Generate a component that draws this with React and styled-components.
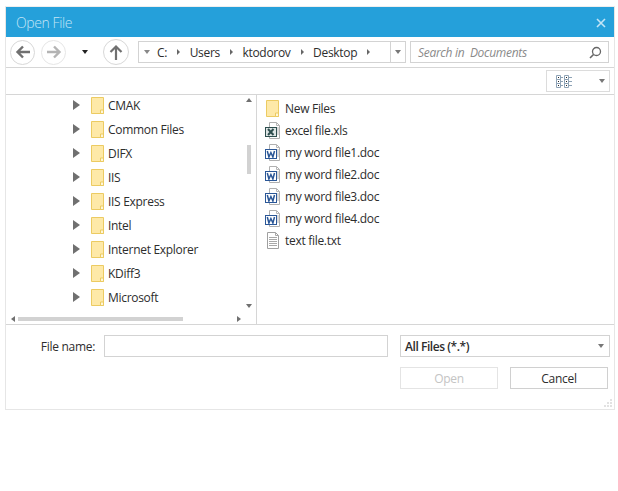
import React from "react";
import styled, { createGlobalStyle } from "styled-components";

const Global = createGlobalStyle`
  html, body { margin: 0; padding: 0; background: #fff; }
  body { font-family: "Open Sans", "Noto Sans", sans-serif; font-size: 12px; letter-spacing: -0.3px; color: #2d2d2d; }
`;

const Page = styled.div`
  width: 618px; height: 491px; padding: 6px 3px 0 5px; box-sizing: border-box; background: #fff;
`;
const Dialog = styled.div`
  width: 610px; height: 404px; box-sizing: border-box; border: 1px solid #e6e6e6; border-top: 1px solid #eee;
  display: flex; flex-direction: column; background: #fff;
`;
const TitleBar = styled.div`
  height: 30px; flex: none; background: #25a0da; display: flex; align-items: center; justify-content: space-between;
  padding: 1px 8px 0 10px; box-sizing: border-box; color: #c4e5f6; font-size: 14px; font-weight: 300; letter-spacing: -0.4px;
`;
const Toolbar = styled.div`
  height: 30px; flex: none; display: flex; align-items: center; padding: 0 5px 0 4px; border-bottom: 1px solid #d6d6d6;
`;
const RoundButton = styled.div`
  width: ${p => p.$size || 25}px; height: ${p => p.$size || 25}px; border: 1px solid ${p => p.$muted ? "#e6e6e6" : "#d8d8d8"}; border-radius: 50%; box-sizing: border-box;
  display: flex; align-items: center; justify-content: center; margin-right: ${p => p.$mr || 0}px; flex: none;
`;
const HistoryCaret = styled.div`
  width: 0; height: 0; border: 3px solid transparent; border-top: 4px solid #222; border-bottom: 0; margin: 0 15px 0 16px; flex: none;
`;
const Crumbs = styled.div`
  margin-left: 9px; width: 268px; height: 22px; box-sizing: border-box; border: 1px solid #d3d3d3; display: flex; align-items: center; flex: none;
`;
const CrumbPath = styled.div`
  flex: 1; display: flex; align-items: center; padding-left: 5px; height: 100%;
`;
const CrumbLabel = styled.span`
  margin-right: 10px; white-space: nowrap;
`;
const SmallDown = styled.span`
  width: 0; height: 0; border: 3px solid transparent; border-top: 4px solid ${p => p.$c || "#777"}; border-bottom: 0; display: block; flex: none; margin-right: ${p => p.$mr || 0}px;
`;
const SmallRight = styled.span`
  width: 0; height: 0; border: 3px solid transparent; border-left: 3px solid #666; border-right: 0; display: block; flex: none; margin-right: 9.5px;
`;
const CrumbDrop = styled.div`
  width: 15px; height: 100%; border-left: 1px solid #d3d3d3; display: flex; align-items: center; justify-content: center; box-sizing: border-box;
`;
const Search = styled.div`
  margin-left: 4px; flex: 1; height: 22px; box-sizing: border-box; border: 1px solid #d3d3d3; display: flex; align-items: center; justify-content: space-between;
  padding: 0 6px 0 7px; color: #8a8a8a; font-style: italic; white-space: pre;
`;
const ViewBar = styled(Toolbar)`
  height: 26px; justify-content: flex-end; padding-right: 4px;
`;
const ViewPicker = styled.div`
  width: 64px; height: 22px; box-sizing: border-box; border: 1px solid #dcdcdc; display: flex; align-items: center; justify-content: space-between; padding: 0 4px 0 9px;
`;
const Panes = styled.div`
  height: 229px; flex: none; display: flex; border-bottom: 1px solid #d6d6d6;
`;
const TreePane = styled.div`
  width: 251px; box-sizing: border-box; flex: none; border-right: 1px solid #d6d6d6; display: flex; flex-direction: column; overflow: hidden;
`;
const TreeBody = styled.div`
  height: 218px; flex: none; display: flex; overflow: hidden;
`;
const TreeList = styled.div`
  flex: 1; padding-left: 67px; margin-top: -2px;
`;
const TreeRow = styled.div`
  height: 24px; display: flex; align-items: center; white-space: nowrap;
`;
const Expander = styled.span`
  width: 0; height: 0; border: 5px solid transparent; border-left: 7px solid #707070; border-right: 0; margin-right: 11px; flex: none; display: block;
`;
const RowLabel = styled.span`
  margin-left: ${p => p.$ml}px; white-space: nowrap;
`;
const VScroll = styled.div`
  width: 14px; flex: none; display: flex; flex-direction: column; align-items: center; padding: 3px 0 0;
`;
const VThumb = styled.div`
  width: 4px; height: 29px; background: #d2d2d2; margin-top: 43px;
`;
const ArrowUp = styled.span`
  width: 0; height: 0; border: 3px solid transparent; border-bottom: 4px solid #707070; border-top: 0; display: block;
`;
const ArrowDown = styled.span`
  width: 0; height: 0; border: 3px solid transparent; border-top: 4px solid #707070; border-bottom: 0; display: block; margin-bottom: 5px; margin-top: auto;
`;
const HScroll = styled.div`
  height: 11px; flex: none; display: flex; align-items: center; padding: 0 15px 0 5px;
`;
const HThumb = styled.div`
  width: 165px; height: 4px; background: #d2d2d2; margin-left: 3px;
`;
const ArrowLeft = styled.span`
  width: 0; height: 0; border: 3px solid transparent; border-right: 4px solid #707070; border-left: 0; display: block;
`;
const ArrowRight = styled.span`
  width: 0; height: 0; border: 3px solid transparent; border-left: 4px solid #707070; border-right: 0; display: block; margin-left: auto;
`;
const FileList = styled.div`
  flex: 1; padding: 2px 0 0 8px;
`;
const FileRow = styled.div`
  height: 22px; display: flex; align-items: center;
`;
const FolderSlot = styled.span`
  display: flex; padding-left: 1px;
`;
const Footer = styled.div`
  flex: 1; display: flex; flex-direction: column; padding: 10px 4px 0 0; position: relative;
`;
const NameRow = styled.div`
  display: flex; align-items: center; height: 22px;
`;
const NameLabel = styled.span`
  width: 89px; text-align: right; flex: none;
`;
const NameInput = styled.div`
  width: 284px; height: 22px; box-sizing: border-box; border: 1px solid #d3d3d3; margin-left: 9px; flex: none;
`;
const TypeSelect = styled.div`
  margin-left: 12px; flex: 1; height: 22px; box-sizing: border-box; border: 1px solid #d3d3d3; display: flex; align-items: center; justify-content: space-between;
  padding: 0 5px 0 4px; font-weight: 600; letter-spacing: -0.45px;
`;
const Actions = styled.div`
  display: flex; justify-content: flex-end; gap: 12px; margin-top: 10px; padding-right: 2px;
`;
const ActionButton = styled.div`
  width: 98px; height: 22px; box-sizing: border-box; border: 1px solid ${p => p.$disabled ? "#e4e4e4" : "#d0d0d0"}; display: flex; align-items: center; justify-content: center;
  color: ${p => p.$disabled ? "#c4c4c4" : "#2d2d2d"};
`;
const Grip = styled.svg`
  position: absolute; right: 2px; bottom: 2px;
`;

const Folder = () => (
  <svg width="13" height="17" viewBox="0 0 13 17">
    <path d="M.5.5h12v16H.5z" fill="#fee9a8" stroke="#eccb62" />
    <path d="M9.5 13v3.5h3V13z" fill="#fff6d8" stroke="#eccb62" />
  </svg>
);
const PageShape = ({ children }) => (
  <svg width="16" height="17" viewBox="0 0 16 17">
    <path d="M4.5.5h7l3 3v13h-10z" fill="#fff" stroke="#b0b0b0" />
    <path d="M11.5.5v3h3M12 6h2M12 8h2M12 10h2M12 12h2" fill="none" stroke="#b8b8b8" />
    {children}
  </svg>
);
const WordIcon = () => (
  <PageShape>
    <rect x=".5" y="5.5" width="11" height="9" fill="#fff" stroke="#2b5797" />
    <path d="M2.3 7l1.6 6 2-4.5 2 4.5 1.6-6" fill="none" stroke="#2b5797" strokeWidth="1.5" />
  </PageShape>
);
const ExcelIcon = () => (
  <PageShape>
    <rect x=".5" y="5.5" width="11" height="9" fill="#dfe6e6" stroke="#2f4f4f" />
    <path d="M3 7l5.5 6M8.5 7L3 13" fill="none" stroke="#2f4f4f" strokeWidth="2" />
  </PageShape>
);
const TextIcon = () => (
  <svg width="16" height="17" viewBox="0 0 16 17">
    <path d="M2.5.5h8l3 3v13h-11z" fill="#fff" stroke="#a0a0a0" />
    <path d="M10.5.5v3h3M4 5.5h8M4 7.5h8M4 9.5h8M4 11.5h8M4 13.5h8" fill="none" stroke="#a8a8a8" />
  </svg>
);
const NavArrow = ({ dir, color }) => (
  <svg width="16" height="14" viewBox="0 0 16 14">
    <path d={dir === "left" ? "M15 7H3M8 1.5L2.5 7 8 12.5" : "M1 7h12M8 1.5L13.5 7 8 12.5"} fill="none" stroke={color} strokeWidth="2.4" />
  </svg>
);
const UpArrow = () => (
  <svg width="14" height="16" viewBox="0 0 14 16">
    <path d="M7 16V3M1.5 8L7 2.5 12.5 8" fill="none" stroke="#707070" strokeWidth="2.2" />
  </svg>
);
const CloseIcon = () => (
  <svg width="10" height="10" viewBox="0 0 10 10">
    <path d="M1 1l8 8M9 1L1 9" stroke="#c4e5f6" strokeWidth="1.6" fill="none" />
  </svg>
);
const SearchIcon = () => (
  <svg width="13" height="13" viewBox="0 0 13 13">
    <circle cx="7.5" cy="5.5" r="4" fill="none" stroke="#666" strokeWidth="1.3" />
    <path d="M4.5 8.5L1 12" stroke="#666" strokeWidth="1.6" />
  </svg>
);
const ViewIcon = () => (
  <svg width="16" height="13" viewBox="0 0 16 13">
    <path d="M.5.5h4v4h-4zM.5 4.5h4v4h-4zM.5 8.5h4v4h-4zM8.5.5h4v4h-4zM8.5 4.5h4v4h-4zM8.5 8.5h4v4h-4z" fill="#fff" stroke="#8ea3b6" />
    <path d="M2 2h1v1H2zM2 6h1v1H2zM2 10h1v1H2zM10 2h1v1h-1zM10 6h1v1h-1zM10 10h1v1h-1z" fill="#222" />
    <path d="M5 2.5h2M5 6.5h2M5 10.5h2M13 2.5h3M13 6.5h3M13 10.5h3" stroke="#8ea3b6" />
  </svg>
);

const tree = ["CMAK", "Common Files", "DIFX", "IIS", "IIS Express", "Intel", "Internet Explorer", "KDiff3", "Microsoft"];
const files = [
  ["New Files", Folder, 6],
  ["excel file.xls", ExcelIcon, 4],
  ["my word file1.doc", WordIcon, 4],
  ["my word file2.doc", WordIcon, 4],
  ["my word file3.doc", WordIcon, 4],
  ["my word file4.doc", WordIcon, 4],
  ["text file.txt", TextIcon, 4],
];
const crumbs = ["Users", "ktodorov", "Desktop"];

export default function App() {
  return (
    <Page>
      <Global />
      <Dialog>
        <TitleBar>
          <span>Open File</span>
          <CloseIcon />
        </TitleBar>
        <Toolbar>
          <RoundButton $mr={6}><NavArrow dir="left" color="#707070" /></RoundButton>
          <RoundButton $muted><NavArrow dir="right" color="#b4b4b4" /></RoundButton>
          <HistoryCaret />
          <RoundButton $size={26}><UpArrow /></RoundButton>
          <Crumbs>
            <CrumbPath>
              <SmallDown $c="#888" $mr={7} />
              <CrumbLabel>C:</CrumbLabel>
              <SmallRight />
              {crumbs.map(c => (
                <React.Fragment key={c}>
                  <CrumbLabel>{c}</CrumbLabel>
                  <SmallRight />
                </React.Fragment>
              ))}
            </CrumbPath>
            <CrumbDrop><SmallDown /></CrumbDrop>
          </Crumbs>
          <Search>
            <span>Search in  Documents</span>
            <SearchIcon />
          </Search>
        </Toolbar>
        <ViewBar>
          <ViewPicker>
            <ViewIcon />
            <SmallDown />
          </ViewPicker>
        </ViewBar>
        <Panes>
          <TreePane>
            <TreeBody>
              <TreeList>
                {tree.map(t => (
                  <TreeRow key={t}>
                    <Expander />
                    <Folder />
                    <RowLabel $ml={4}>{t}</RowLabel>
                  </TreeRow>
                ))}
              </TreeList>
              <VScroll>
                <ArrowUp />
                <VThumb />
                <ArrowDown />
              </VScroll>
            </TreeBody>
            <HScroll>
              <ArrowLeft />
              <HThumb />
              <ArrowRight />
            </HScroll>
          </TreePane>
          <FileList>
            {files.map(([name, Icon, ml]) => (
              <FileRow key={name}>
                {Icon === Folder ? <FolderSlot><Icon /></FolderSlot> : <Icon />}
                <RowLabel $ml={ml}>{name}</RowLabel>
              </FileRow>
            ))}
          </FileList>
        </Panes>
        <Footer>
          <NameRow>
            <NameLabel>File name:</NameLabel>
            <NameInput />
            <TypeSelect>
              <span>All Files (*.*)</span>
              <SmallDown />
            </TypeSelect>
          </NameRow>
          <Actions>
            <ActionButton $disabled>Open</ActionButton>
            <ActionButton>Cancel</ActionButton>
          </Actions>
          <Grip width="9" height="9" viewBox="0 0 9 9">
            <path d="M7 1h2v2H7zM4 4h2v2H4zM7 4h2v2H7zM1 7h2v2H1zM4 7h2v2H4zM7 7h2v2H7z" fill="#e2e2e2" />
          </Grip>
        </Footer>
      </Dialog>
    </Page>
  );
}
